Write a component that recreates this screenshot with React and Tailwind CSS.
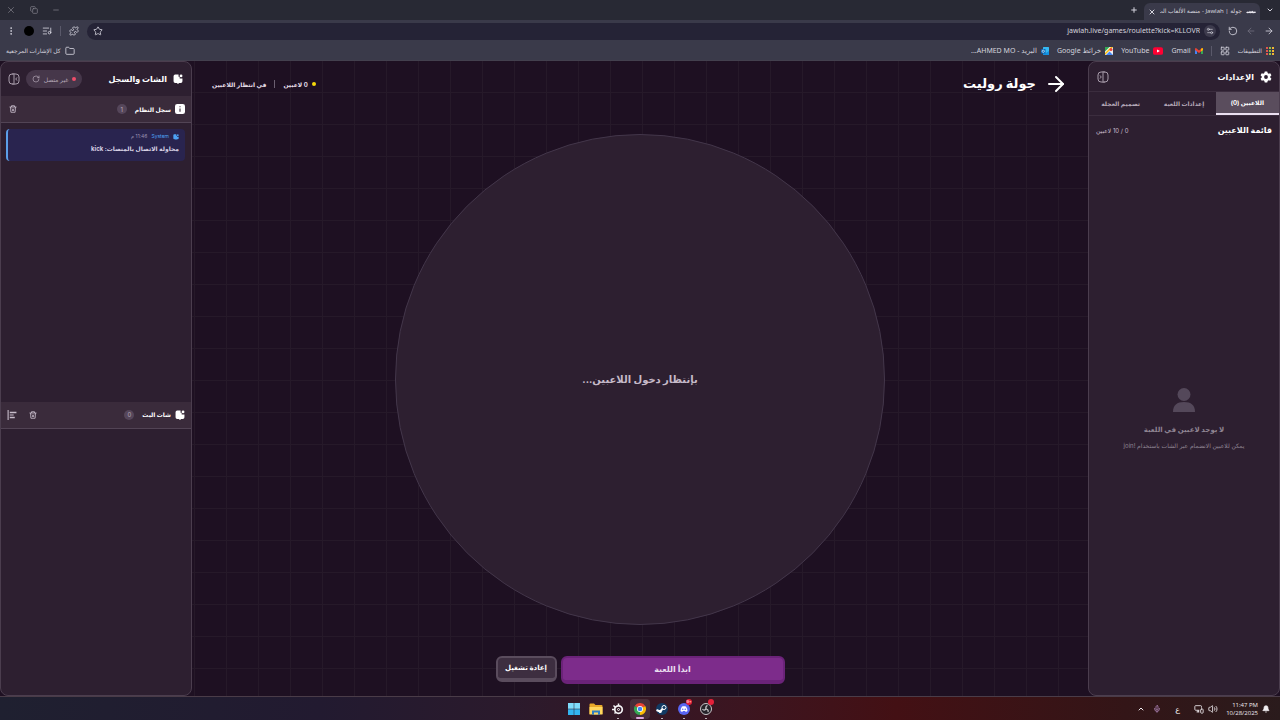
import React, { useState } from 'react'
import {
  ArrowLeft, ArrowRight, Bell, ChevronDown, ChevronUp, Copy, EllipsisVertical, Folder, ListMusic,
  LayoutGrid, Mic, Minus, MonitorSmartphone, Plus, Puzzle, RotateCw, RotateCcw, Settings2, Star, Volume2, X,
} from 'lucide-react'

const PlaneIcon = () => (
  <svg viewBox="0 0 16 8" className="h-2 w-2.5" fill="#e8e6ee">
    <path d="M0 4.5 3 3l2 1 1-2 2 1.5L10 2l2 1.5L15 3l1 2-4 1-3-.5L7 6 5 5.5 2 6z" />
  </svg>
)

const ChatIcon = ({ className }) => (
  <svg viewBox="0 0 18 18" className={className} fill="currentColor">
    <path d="M4 1h6v4h2v3h5v5a3 3 0 0 1-3 3h-3l-2 2-2-2H4a3 3 0 0 1-3-3V4a3 3 0 0 1 3-3z" />
    <circle cx="14.5" cy="3.5" r="2.5" />
  </svg>
)

const InfoIcon = () => (
  <svg viewBox="0 0 18 18" className="size-2.5">
    <rect width="18" height="18" rx="4" fill="#fff" />
    <path d="M8 8h2v6H8zM8 4h2v2H8z" fill="#3c2b3b" />
  </svg>
)

const GearIcon = () => (
  <svg viewBox="0 0 24 24" className="size-3" fill="#fff">
    <path fillRule="evenodd" d="M9.5 1h5l.8 3.2 2 1.1 3.2-1 2.4 4.2L20.500 11v2l2.400 2.500-2.400 4.200-3.200-1-2 1.100L14.500 23h-5l-.8-3.200-2-1.100-3.200 1-2.400-4.200L3.500 13v-2L1.100 8.500l2.400-4.200 3.200 1 2-1.100zM12 8.200a3.800 3.800 0 1 0 0 7.600 3.800 3.800 0 0 0 0-7.600z" />
  </svg>
)

const PanelIcon = ({ className }) => (
  <svg viewBox="0 0 24 24" className={className} fill="none" stroke="currentColor" strokeWidth="1.800" strokeLinecap="round">
    <path d="M9 2H8a6 6 0 0 0-6 6v8a6 6 0 0 0 6 6h1M14 2h2a6 6 0 0 1 6 6v8a6 6 0 0 1-6 6h-2M12 1v22M17.500 9.500 15.500 12l2 2.500" />
    <path d="M9 2h3M9 22h3" />
  </svg>
)

const TrashIcon = () => (
  <svg viewBox="0 0 16 16" className="size-2" fill="none" stroke="currentColor" strokeWidth="1.700">
    <path d="M1 4h14M5 4V1.500h6V4M3 4l.8 10.500h8.400L13 4M6 7l4 5M10 7l-4 5" />
  </svg>
)

const AlignIcon = () => (
  <svg viewBox="0 0 18 18" className="size-2.5" fill="currentColor">
    <path d="M1 0h2v18H1zM5 3h12v3H5zM5 8h7v2H5zM5 12h9v3H5z" />
  </svg>
)

const AppsIcon = () => (
  <svg viewBox="0 0 12 12" className="size-2">
    <path d="M0 0h3v3H0zM0 4.500h3v3H0zM0 9h3v3H0z" fill="#e2574c" />
    <path d="M4.500 0h3v3h-3zM4.500 4.500h3v3h-3zM4.500 9h3v3h-3z" fill="#8bc34a" />
    <path d="M9 0h3v3H9zM9 4.500h3v3H9zM9 9h3v3H9z" fill="#f2b632" />
  </svg>
)

const GmailIcon = () => (
  <svg viewBox="0 0 16 12" className="h-2 w-2">
    <path d="M0 2v10h4V5z" fill="#4285f4" />
    <path d="M16 2v10h-4V5z" fill="#34a853" />
    <path d="m0 1 2-1 6 5 6-5 2 1v3L8 10 0 4z" fill="#ea4335" />
    <path d="m12 2 2-2 2 1v3l-4 3z" fill="#fbbc04" />
  </svg>
)

const YoutubeIcon = () => (
  <svg viewBox="0 0 16 12" className="h-2 w-2.5">
    <rect width="16" height="12" rx="3" fill="#ff0033" />
    <path d="m6.500 3.500 4.500 2.500-4.500 2.500z" fill="#fff" />
  </svg>
)

const MapsIcon = () => (
  <svg viewBox="0 0 16 16" className="size-2">
    <rect width="16" height="16" rx="1" fill="#eceff1" />
    <path d="M0 0h9L0 9z" fill="#34a853" />
    <path d="m2 16 7-7 7 7z" fill="#4285f4" />
    <path d="M0 12 12 0h4L0 16z" fill="#fbbc04" />
    <circle cx="12" cy="5" r="3" fill="#ea4335" />
  </svg>
)

const OutlookIcon = () => (
  <svg viewBox="0 0 16 16" className="size-2">
    <rect x="4" width="12" height="15" rx="1" fill="#35b8f1" />
    <path d="m4 9 6 3 6-4v8H4z" fill="#1490df" />
    <rect y="4" width="9" height="9" rx="1" fill="#0a64b4" />
    <circle cx="4.500" cy="8.500" r="2.300" fill="none" stroke="#fff" strokeWidth="1.300" />
  </svg>
)

const WindowsIcon = () => (
  <svg viewBox="0 0 24 24" className="size-3">
    <path d="M0 0h11.500v11.500H0zM12.500 0H24v11.500H12.500z" fill="#7fdcfb" />
    <path d="M0 12.500h11.500V24H0zM12.500 12.500H24V24H12.500z" fill="#32b4f0" />
  </svg>
)

const ExplorerIcon = () => (
  <svg viewBox="0 0 26 24" className="h-3 w-3.5">
    <path d="M0 3a2 2 0 0 1 2-2h7l3 3h12a2 2 0 0 1 2 2v16H0z" fill="#e8a92a" />
    <path d="M0 8h26v15H0z" fill="#ffd75e" />
    <path d="M5 15h16v8H5z" fill="#2d7fc4" />
    <path d="M9 19h8v4H9z" fill="#ffd75e" />
  </svg>
)

const SteelIcon = () => (
  <svg viewBox="0 0 24 24" className="size-3" fill="none" stroke="#f4f2f4">
    <circle cx="13" cy="13" r="7.500" strokeWidth="3.500" />
    <circle cx="13" cy="13" r="2" strokeWidth="2" />
    <path d="M13 1v4M0 13h6M3 5l4 4M5 21l3-3" strokeWidth="3" />
  </svg>
)

const ChromeIcon = () => (
  <svg viewBox="0 0 24 24" className="size-3">
    <path d="M12 12 1.600 6A12 12 0 0 1 22.400 6z" fill="#ea4335" />
    <path d="M12 12 22.400 6A12 12 0 0 1 12 24z" fill="#fbbc04" />
    <path d="M12 12v12A12 12 0 0 1 1.600 6z" fill="#34a853" />
    <circle cx="12" cy="12" r="6" fill="#fff" />
    <circle cx="12" cy="12" r="4.500" fill="#4285f4" />
  </svg>
)

const SteamIcon = () => (
  <svg viewBox="0 0 24 24" className="size-3">
    <circle cx="12" cy="12" r="12" fill="#123a63" />
    <path d="m1 14 7 3 5-5 4-1" stroke="#fff" strokeWidth="4" fill="none" />
    <circle cx="16" cy="9" r="4" fill="#123a63" stroke="#fff" strokeWidth="2" />
    <circle cx="8.500" cy="17" r="3" fill="#fff" />
  </svg>
)

const DiscordIcon = () => (
  <svg viewBox="0 0 24 24" className="size-3">
    <circle cx="12" cy="12" r="12" fill="#5865f2" />
    <path d="M8 7c3-1 5-1 8 0 2 3 3 6 3 9-2 1.500-3 1.500-4 1.500l-1-1.500h-4l-1 1.500c-1 0-2 0-4-1.500 0-3 1-6 3-9z" fill="#fff" />
    <circle cx="9.500" cy="12.500" r="1.500" fill="#5865f2" />
    <circle cx="14.500" cy="12.500" r="1.500" fill="#5865f2" />
  </svg>
)

const ObsIcon = () => (
  <svg viewBox="0 0 24 24" className="size-3">
    <circle cx="12" cy="12" r="11" fill="#26232a" stroke="#c9c7ca" strokeWidth="2" />
    <path d="M12 12c-1-4 0-6 3-7M12 12c4 1 5 3 4 6M12 12c-3 3-5 3-7 0" stroke="#c9c7ca" strokeWidth="2.500" fill="none" />
  </svg>
)

const bookmarks = [
  { label: 'Gmail', icon: GmailIcon },
  { label: 'YouTube', icon: YoutubeIcon },
  { label: 'خرائط Google', icon: MapsIcon },
  { label: 'البريد - AHMED MO...', icon: OutlookIcon },
]

const taskbarApps = [
  { name: 'Start', icon: WindowsIcon },
  { name: 'Explorer', icon: ExplorerIcon },
  { name: 'SteelSeries', icon: SteelIcon, running: true },
  { name: 'Chrome', icon: ChromeIcon, active: true },
  { name: 'Steam', icon: SteamIcon, running: true },
  { name: 'Discord', icon: DiscordIcon, running: true, badge: '9+' },
  { name: 'OBS', icon: ObsIcon, running: true, badge: ' ' },
]

const tabs = ['اللاعبين (0)', 'إعدادات اللعبة', 'تصميم العجلة']

function BrowserBar() {
  return (
    <div className="shrink-0 bg-[#3a3a4a] font-['Noto_Sans','DejaVu_Sans',sans-serif] text-[7px] text-[#d5d4de]">
      <div className="flex h-5 items-end justify-between bg-[#282934]">
        <div className="flex h-full items-center">
          <button aria-label="Search tabs" className="flex w-5 justify-center"><ChevronDown className="size-2" strokeWidth={3} /></button>
          <div className="flex h-[17px] w-[116px] items-center gap-1 self-end rounded-t-md bg-[#3a3a4a] px-1">
            <PlaneIcon />
            <span className="min-w-0 flex-1 overflow-hidden whitespace-nowrap text-[6px]">جولة | Jawlah - منصة الألعاب الت</span>
            <button aria-label="Close tab"><X className="size-2" strokeWidth={3} /></button>
          </div>
          <button aria-label="New tab" className="flex w-5 justify-center"><Plus className="size-2" strokeWidth={3} /></button>
        </div>
        <div className="flex h-full items-center gap-3.5 pl-1.5 text-[#8b8a94]">
          <button aria-label="Minimize"><Minus className="size-2" /></button>
          <button aria-label="Restore"><Copy className="size-2" /></button>
          <button aria-label="Close"><X className="size-2.5" strokeWidth={1.500} /></button>
        </div>
      </div>

      <div className="flex h-[22px] items-center gap-2 px-1.5">
        <button aria-label="Back"><ArrowRight className="size-2.5" /></button>
        <button aria-label="Forward" className="text-[#6f6e7c]"><ArrowLeft className="size-2.5" /></button>
        <button aria-label="Reload"><RotateCcw className="size-2.5" /></button>
        <div className="flex h-[17px] flex-1 items-center gap-1 rounded-full bg-[#252336] pl-1.5 pr-1">
          <span className="flex size-3 items-center justify-center rounded-full bg-[#3d3b4d]"><Settings2 className="size-2" /></span>
          <input
            aria-label="Address"
            dir="ltr"
            defaultValue="jawlah.live/games/roulette?kick=KLLOVR"
            className="min-w-0 flex-1 bg-transparent text-right outline-none"
          />
          <button aria-label="Bookmark"><Star className="size-2.5" /></button>
        </div>
        <button aria-label="Extensions"><Puzzle className="size-2.5" /></button>
        <span className="h-2.5 w-px bg-[#5a596a]" />
        <button aria-label="Media"><ListMusic className="size-2.5" /></button>
        <span className="size-2.5 rounded-full bg-black" />
        <button aria-label="Menu"><EllipsisVertical className="size-2.5" /></button>
      </div>

      <div className="flex h-[18px] items-center justify-between px-1.5">
        <div className="flex items-center gap-2">
          <a href="#apps" className="flex items-center gap-1"><AppsIcon /><span className="text-[6px]">التطبيقات</span></a>
          <LayoutGrid className="size-2.5" />
          <span className="h-2.5 w-px bg-[#5a596a]" />
          {bookmarks.map(({ label, icon: Icon }) => (
            <a key={label} href="#bookmark" className="flex items-center gap-1">
              <Icon />
              <span>{label}</span>
            </a>
          ))}
        </div>
        <a href="#all" className="flex items-center gap-1">
          <Folder className="size-2.5" />
          <span className="text-[6px]">كل الإشارات المرجعية</span>
        </a>
      </div>
    </div>
  )
}

function SettingsPanel() {
  const [active, setActive] = useState(0)

  return (
    <aside className="flex w-48 shrink-0 flex-col rounded-lg border border-[#4b3d4e] bg-[#2d1f30]">
      <div className="flex h-[30px] items-center justify-between border-b border-[#3b2d3e] pl-2 pr-[7px]">
        <h2 className="flex items-center gap-1.5 text-[8px] font-bold text-white"><GearIcon />الإعدادات</h2>
        <button aria-label="Collapse settings" className="text-[#b5a9b8]"><PanelIcon className="size-3 -scale-x-100" /></button>
      </div>
      <div className="grid h-6 shrink-0 grid-cols-3 border-b border-[#3b2d3e]">
        {tabs.map((tab, index) => (
          <button
            key={tab}
            onClick={() => setActive(index)}
            className={index === active
              ? 'whitespace-nowrap border-b-2 border-[#eadff0] bg-[#5a4d5d] text-[6px] font-bold text-white'
              : 'whitespace-nowrap text-[6px] font-bold text-[#b5a9b8]'}
          >
            {tab}
          </button>
        ))}
      </div>
      <div className="flex h-7 items-center justify-between px-[7px]">
        <h3 className="text-[8px] font-bold text-white">قائمة اللاعبين</h3>
        <span className="text-[6px] text-[#c8bdcb]">0 / 10 لاعبين</span>
      </div>
      <div className="flex flex-1 flex-col items-center justify-center text-[#8f8492]">
        <svg viewBox="0 0 22 24" className="h-6 w-[22px]" fill="#54485a">
          <circle cx="11" cy="6.500" r="6.500" />
          <path d="M0 24c0-7 4-10 11-10s11 3 11 10z" />
        </svg>
        <p className="mt-3 text-[7px] font-bold leading-3">لا يوجد لاعبين في اللعبة</p>
        <p className="mt-1 text-[6px] leading-3">يمكن للاعبين الانضمام عبر الشات باستخدام !join</p>
      </div>
    </aside>
  )
}

function Wheel() {
  return (
    <main className="flex min-w-0 flex-1 flex-col bg-[#1e1022] bg-[linear-gradient(to_right,#261929_1px,transparent_1px),linear-gradient(to_bottom,#261929_1px,transparent_1px)] bg-[length:32px_32px] bg-[position:2px_-1px]">
      <div className="flex h-[46px] shrink-0 items-center justify-between px-5">
        <h1 className="flex items-center gap-2 text-[13px] font-bold text-white">
          <ArrowRight className="size-6" strokeWidth={2} />
          جولة روليت
        </h1>
        <div className="flex items-center gap-1 text-[6px] font-bold text-[#e6dfe8]">
          <span className="size-1 rounded-full bg-[#f5d90a]" />
          <span>0 لاعبين</span>
          <span className="mx-1 h-2 w-px bg-[#6b5f70]" />
          <span>في انتظار اللاعبين</span>
        </div>
      </div>
      <div className="flex min-h-0 flex-1 items-center justify-center">
        <div className="flex aspect-square h-[90%] items-center justify-center rounded-full border border-[#43364a] bg-[#2d1f30]">
          <p className="text-[10px] font-bold text-[#c6bac9]">بإنتظار دخول اللاعبين...</p>
        </div>
      </div>
      <div className="flex h-11 shrink-0 items-start justify-center gap-1 pt-1">
        <button className="h-7 w-56 rounded-md border-2 border-b-4 border-[#6b2379] bg-[#7d2c8b] text-[8px] font-bold text-[#eadff0]">ابدأ اللعبة</button>
        <button className="h-[26px] w-[61px] whitespace-nowrap rounded-md border-2 border-b-4 border-[#5a4c5d] bg-[#3d2e40] text-[7px] font-bold text-white">إعادة تشغيل</button>
      </div>
    </main>
  )
}

function SectionHeader({ icon, title, count, children }) {
  return (
    <div className="flex h-[27px] shrink-0 items-center justify-between border-b border-[#524455] bg-[#3a2b3b] px-1.5">
      <div className="flex items-center gap-1 text-white">
        {icon}
        <h3 className="text-[6px] font-bold">{title}</h3>
        <span className="mr-1 flex size-2.5 items-center justify-center rounded-full bg-[#55465a] text-[6px] text-[#b5a9b8]">{count}</span>
      </div>
      <div className="flex items-center gap-3 text-[#c8bdcb]">{children}</div>
    </div>
  )
}

function ChatPanel() {
  return (
    <aside className="flex w-48 shrink-0 flex-col rounded-lg border border-[#4b3d4e] bg-[#2d1f30]">
      <div className="flex h-[34px] shrink-0 items-center justify-between pl-[7px] pr-2">
        <h2 className="flex items-center gap-1.5 text-[8px] font-bold text-white">
          <ChatIcon className="size-2.5" />
          الشات والسجل
        </h2>
        <div className="flex items-center gap-1.5 text-[#b5a9b8]">
          <button className="flex h-[18px] w-14 items-center justify-center gap-1 whitespace-nowrap rounded-full bg-[#46374a] text-[6px]">
            <span className="size-1 rounded-full bg-[#ee4d6a]" />
            غير متصل
            <RotateCw className="size-2" />
          </button>
          <button aria-label="Collapse chat"><PanelIcon className="size-3" /></button>
        </div>
      </div>

      <SectionHeader icon={<InfoIcon />} title="سجل النظام" count="1">
        <button aria-label="Clear log" className="px-0.5"><TrashIcon /></button>
      </SectionHeader>
      <div className="flex-1 p-1.5 pl-[5px]">
        <div className="h-8 rounded-sm border-l-2 border-[#5b9fe8] bg-[#29244f] px-1.5 py-0.5">
          <div className="flex h-3 items-center gap-1 text-[5px] text-[#9d94b3]">
            <ChatIcon className="size-1.5 text-[#4da3f5]" />
            <span className="text-[#4da3f5]">System</span>
            <span>11:46 م</span>
          </div>
          <p className="text-[6px] font-bold leading-3 text-[#d8d2e4]">محاولة الاتصال بالمنصات: kick</p>
        </div>
      </div>

      <SectionHeader icon={<ChatIcon className="size-2.5" />} title="شات البث" count="0">
        <button aria-label="Clear chat"><TrashIcon /></button>
        <button aria-label="Align chat"><AlignIcon /></button>
      </SectionHeader>
      <div className="flex-1" />
    </aside>
  )
}

function Taskbar() {
  return (
    <footer dir="ltr" className="grid h-6 shrink-0 grid-cols-[1fr_auto_1fr] items-center border-t border-[#4a3c48] bg-[linear-gradient(to_right,#1f2030,#221a30_25%,#2b1a2c_40%,#3c1520_58%,#431014_70%,#331517_88%,#2a1b1c)] px-2 text-[#f0edf0]">
      <div />
      <div className="flex gap-0.5">
        {taskbarApps.map(({ name, icon: Icon, active, running, badge }) => (
          <button
            key={name}
            aria-label={name}
            className={active
              ? 'relative flex h-5 w-5 items-center justify-center rounded-sm bg-white/10'
              : 'relative flex h-5 w-5 items-center justify-center'}
          >
            <Icon />
            {badge && (
              <span className="absolute right-0.5 top-0 flex size-1.5 items-center justify-center rounded-full bg-[#e5203a] text-[4px] text-white">{badge}</span>
            )}
            {active && <span className="absolute bottom-0 h-0.5 w-2 rounded-full bg-[#dba6dc]" />}
            {running && <span className="absolute bottom-0 h-px w-0.5 bg-[#b9b0b6]" />}
          </button>
        ))}
      </div>
      <div className="flex items-center justify-end gap-2 pr-0.5 font-['Open_Sans','DejaVu_Sans',sans-serif] text-[6px]">
        <ChevronUp className="size-2" strokeWidth={3} />
        <Mic className="size-2 text-[#c79bd6]" />
        <span className="px-1.5 text-[8px]">ع</span>
        <div className="flex gap-1">
          <MonitorSmartphone className="size-2.5" />
          <Volume2 className="size-2.5" />
        </div>
        <div className="flex items-center gap-1">
          <div className="text-right leading-2">
            <p>11:47 PM</p>
            <p>10/28/2025</p>
          </div>
          <Bell className="size-2" fill="currentColor" />
        </div>
      </div>
    </footer>
  )
}

export default function App() {
  return (
    <div dir="rtl" className="flex h-screen flex-col overflow-hidden bg-[#1e1022] font-['Inter','DejaVu_Sans',sans-serif]">
      <BrowserBar />
      <div className="flex min-h-0 flex-1 border-t border-[#43404e]">
        <SettingsPanel />
        <Wheel />
        <ChatPanel />
      </div>
      <Taskbar />
    </div>
  )
}
